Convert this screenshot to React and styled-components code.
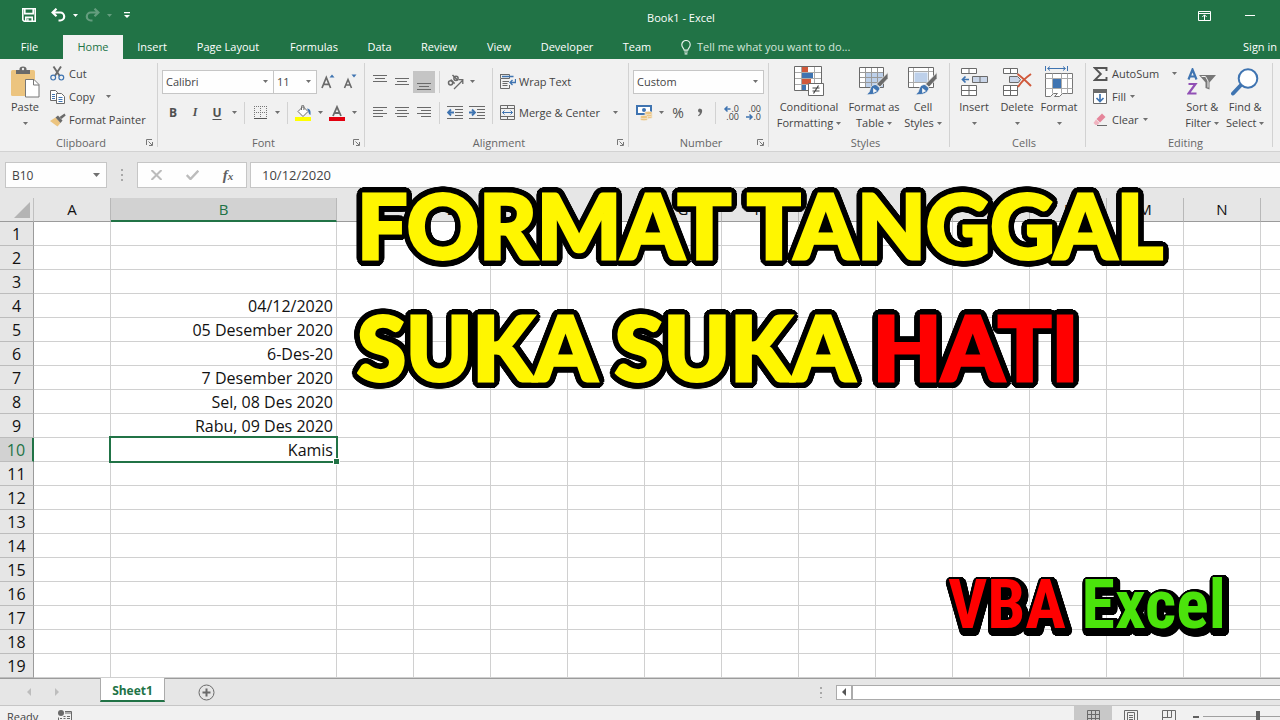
import React from "react";
import styled, { createGlobalStyle, css } from "styled-components";

const colors = {
    green: "#217346",
    ribbon: "#f1f1f1",
    chrome: "#e6e6e6",
    line: "#d2d2d2",
    field: "#c6c6c6",
    text: "#444444",
    blue: "#3f74b1",
    grid: "#d0d0d0",
};

const tabs = [
    ["Home", 60],
    ["Insert", 58],
    ["Page Layout", 94],
    ["Formulas", 78],
    ["Data", 53],
    ["Review", 66],
    ["View", 54],
    ["Developer", 82],
    ["Team", 58],
];

const columns = "ABCDEFGHIJKLMNOPQRSTUVWXYZ".split("");

const dates = {
    4: "04/12/2020",
    5: "05 Desember 2020",
    6: "6-Des-20",
    7: "7 Desember 2020",
    8: "Sel, 08 Des 2020",
    9: "Rabu, 09 Des 2020",
    10: "Kamis",
};

const rows = Array.from({ length: 19 }, (_, i) => i + 1);

/* Contour arrondi : un anneau d'ombres autour des lettres */
const outline = (radius, dx = 0, dy = 0) =>
    Array.from({ length: 32 }, (_, i) => {
        const angle = (i * Math.PI) / 16;
        const x = (Math.cos(angle) * radius + dx).toFixed(1);
        const y = (Math.sin(angle) * radius + dy).toFixed(1);
        return `${x}px ${y}px #000000`;
    }).join(", ");

export default function App() {
    return (
        <Window>
            <GlobalStyle/>
            <TitleBar/>
            <Ribbon/>
            <FormulaBar/>
            <Sheet/>
            <SheetBar/>
            <StatusBar/>
        </Window>
    );
}

/* ====== HEADER ====== */

function TitleBar() {
    return (
        <Header>
            <TitleRow>
                <QuickAccess>
                    <QuickButton aria-label="Save" $width={30}><SaveIcon/></QuickButton>
                    <QuickButton aria-label="Undo" $width={28}><UndoIcon/></QuickButton>
                    <QuickButton aria-label="Undo history" $width={6}><Caret light/></QuickButton>
                    <QuickButton aria-label="Redo" $width={28} $faded><RedoIcon/></QuickButton>
                    <QuickButton aria-label="Redo history" $width={6} $faded><Caret light/></QuickButton>
                    <QuickButton aria-label="Customize toolbar" $width={30}><CustomizeIcon/></QuickButton>
                </QuickAccess>
                <BookTitle>Book1 - Excel</BookTitle>
                <WindowButtons>
                    <QuickButton aria-label="Ribbon display options" $width={46}><RibbonOptionsIcon/></QuickButton>
                    <QuickButton aria-label="Minimize" $width={46}><MinimizeIcon/></QuickButton>
                </WindowButtons>
            </TitleRow>
            <TabRow>
                <FileTab>File</FileTab>
                {tabs.map(([name, width]) => (
                    <Tab key={name} $width={width} $active={name === "Home"}>{name}</Tab>
                ))}
                <TellMe>
                    <BulbIcon/>
                    Tell me what you want to do...
                </TellMe>
                <SignIn href="#signin">Sign in</SignIn>
            </TabRow>
        </Header>
    );
}

/* ====== RIBBON ====== */

function Ribbon() {
    return (
        <RibbonBar>
            <RibbonGroup label="Clipboard" width={158} launcher>
                <BigButton $width={50}>
                    <BigIcon><PasteIcon/></BigIcon>
                    Paste
                    <CaretLine><Caret/></CaretLine>
                </BigButton>
                <SmallColumn>
                    <SmallButton><SmallIcon><CutIcon/></SmallIcon>Cut</SmallButton>
                    <SmallButton><SmallIcon><CopyIcon/></SmallIcon>Copy<Caret gap={11}/></SmallButton>
                    <SmallButton><SmallIcon><PainterIcon/></SmallIcon>Format Painter</SmallButton>
                </SmallColumn>
            </RibbonGroup>

            <RibbonGroup label="Font" width={207} launcher>
                <ToolColumn $start={4}>
                    <ToolRow>
                        <Combo label="Font name" value="Calibri" width={112}/>
                        <Combo label="Font size" value="11" width={44} joined/>
                        <ToolButton aria-label="Increase font size"><GrowIcon/></ToolButton>
                        <ToolButton aria-label="Decrease font size"><ShrinkIcon/></ToolButton>
                    </ToolRow>
                    <ToolRow>
                        <ToolButton aria-label="Bold"><Letter>B</Letter></ToolButton>
                        <ToolButton aria-label="Italic"><Letter $italic>I</Letter></ToolButton>
                        <ToolButton aria-label="Underline"><Letter $underline>U</Letter></ToolButton>
                        <DropButton aria-label="Underline styles"><Caret/></DropButton>
                        <Divider/>
                        <ToolButton aria-label="Borders"><BordersIcon/></ToolButton>
                        <DropButton aria-label="Border styles"><Caret/></DropButton>
                        <Divider/>
                        <ToolButton aria-label="Fill color"><FillColorIcon/></ToolButton>
                        <DropButton aria-label="Fill colors"><Caret/></DropButton>
                        <ToolButton aria-label="Font color"><FontColorIcon/></ToolButton>
                        <DropButton aria-label="Font colors"><Caret/></DropButton>
                    </ToolRow>
                </ToolColumn>
            </RibbonGroup>

            <RibbonGroup label="Alignment" width={264} launcher>
                <ToolColumn $start={4}>
                    <ToolRow>
                        <ToolButton aria-label="Top align"><LinesIcon y={2}/></ToolButton>
                        <ToolButton aria-label="Middle align"><LinesIcon y={5}/></ToolButton>
                        <ToolButton aria-label="Bottom align" $pressed><LinesIcon y={10}/></ToolButton>
                        <Divider/>
                        <ToolButton aria-label="Orientation"><OrientationIcon/></ToolButton>
                        <DropButton aria-label="Orientation options"><Caret/></DropButton>
                    </ToolRow>
                    <ToolRow>
                        <ToolButton aria-label="Align left"><AlignIcon side="left"/></ToolButton>
                        <ToolButton aria-label="Center"><AlignIcon side="center"/></ToolButton>
                        <ToolButton aria-label="Align right"><AlignIcon side="right"/></ToolButton>
                        <Divider/>
                        <ToolButton aria-label="Decrease indent"><IndentIcon/></ToolButton>
                        <ToolButton aria-label="Increase indent"><IndentIcon increase/></ToolButton>
                    </ToolRow>
                </ToolColumn>
                <TallDivider/>
                <ToolColumn $start={3}>
                    <ToolRow>
                        <SmallButton><SmallIcon><WrapIcon/></SmallIcon>Wrap Text</SmallButton>
                    </ToolRow>
                    <ToolRow>
                        <SmallButton><SmallIcon><MergeIcon/></SmallIcon>Merge &amp; Center<Caret gap={13}/></SmallButton>
                    </ToolRow>
                </ToolColumn>
            </RibbonGroup>

            <RibbonGroup label="Number" width={140} launcher>
                <ToolColumn $start={4}>
                    <ToolRow>
                        <Combo label="Number format" value="Custom" width={131}/>
                    </ToolRow>
                    <ToolRow>
                        <ToolButton aria-label="Accounting format"><MoneyIcon/></ToolButton>
                        <DropButton aria-label="Currencies"><Caret/></DropButton>
                        <ToolButton aria-label="Percent style"><Letter $large>%</Letter></ToolButton>
                        <ToolButton aria-label="Comma style"><CommaIcon/></ToolButton>
                        <Divider/>
                        <ToolButton aria-label="Increase decimal"><DecimalIcon/></ToolButton>
                        <ToolButton aria-label="Decrease decimal"><DecimalIcon decrease/></ToolButton>
                    </ToolRow>
                </ToolColumn>
            </RibbonGroup>

            <RibbonGroup label="Styles" width={181}>
                <BigButton $width={80}>
                    <BigIcon><ConditionalIcon/></BigIcon>
                    Conditional
                    <CaretLine>Formatting<Caret/></CaretLine>
                </BigButton>
                <BigButton $width={50}>
                    <BigIcon><TableStyleIcon/></BigIcon>
                    Format as
                    <CaretLine>Table<Caret/></CaretLine>
                </BigButton>
                <BigButton $width={48}>
                    <BigIcon><CellStyleIcon/></BigIcon>
                    Cell
                    <CaretLine>Styles<Caret/></CaretLine>
                </BigButton>
            </RibbonGroup>

            <RibbonGroup label="Cells" width={136}>
                <BigButton $width={48}>
                    <BigIcon><InsertIcon/></BigIcon>
                    Insert
                    <CaretLine><Caret/></CaretLine>
                </BigButton>
                <BigButton $width={38}>
                    <BigIcon><DeleteIcon/></BigIcon>
                    Delete
                    <CaretLine><Caret/></CaretLine>
                </BigButton>
                <BigButton $width={46}>
                    <BigIcon><FormatIcon/></BigIcon>
                    Format
                    <CaretLine><Caret/></CaretLine>
                </BigButton>
            </RibbonGroup>

            <RibbonGroup label="Editing" width={187}>
                <SmallColumn $start={7}>
                    <SmallButton><SmallIcon><SumIcon/></SmallIcon>AutoSum<Caret gap={13}/></SmallButton>
                    <SmallButton><SmallIcon><FillDownIcon/></SmallIcon>Fill<Caret gap={4}/></SmallButton>
                    <SmallButton><SmallIcon><EraserIcon/></SmallIcon>Clear<Caret gap={4}/></SmallButton>
                </SmallColumn>
                <BigButton $width={50}>
                    <BigIcon><SortIcon/></BigIcon>
                    Sort &amp;
                    <CaretLine>Filter<Caret/></CaretLine>
                </BigButton>
                <BigButton $width={36}>
                    <BigIcon><FindIcon/></BigIcon>
                    Find &amp;
                    <CaretLine>Select<Caret/></CaretLine>
                </BigButton>
            </RibbonGroup>
        </RibbonBar>
    );
}

function RibbonGroup({ label, width, launcher, children }) {
    return (
        <Group $width={width}>
            <GroupBody>{children}</GroupBody>
            <GroupFooter>
                <span>{label}</span>
                {launcher && (
                    <Launcher aria-label={`${label} settings`}><LauncherIcon/></Launcher>
                )}
            </GroupFooter>
        </Group>
    );
}

function Combo({ label, value, width, joined }) {
    return (
        <ComboBox $width={width} $joined={joined}>
            <select aria-label={label} defaultValue={value}>
                <option>{value}</option>
            </select>
            <Caret/>
        </ComboBox>
    );
}

/* ====== FORMULA BAR ====== */

function FormulaBar() {
    return (
        <FormulaRow>
            <NameBox>
                <input aria-label="Name box" defaultValue="B10"/>
                <Caret wide/>
            </NameBox>
            <Dots/>
            <FormulaTools>
                <FormulaButton aria-label="Cancel"><CancelIcon/></FormulaButton>
                <FormulaButton aria-label="Enter"><EnterIcon/></FormulaButton>
                <FormulaButton aria-label="Insert function"><Fx>f<small>x</small></Fx></FormulaButton>
            </FormulaTools>
            <FormulaInput aria-label="Formula" defaultValue="10/12/2020"/>
        </FormulaRow>
    );
}

/* ====== SHEET ====== */

function Sheet() {
    return (
        <SheetArea>
            <GridClip>
                <Grid>
                    <colgroup>
                        <Col $width={34}/>
                        {columns.map((name) => (
                            <Col key={name} $width={name === "B" ? 226 : 77}/>
                        ))}
                    </colgroup>
                    <thead>
                        <tr>
                            <Corner aria-label="Select all">
                                <svg width="16" height="16" viewBox="0 0 16 16"><path d="M16 0V16H0z" fill="#b4b4b4"/></svg>
                            </Corner>
                            {columns.map((name) => (
                                <ColumnHead key={name} scope="col" $selected={name === "B"}>{name}</ColumnHead>
                            ))}
                        </tr>
                    </thead>
                    <tbody>
                        {rows.map((row) => (
                            <tr key={row}>
                                <RowHead scope="row" $selected={row === 10}>{row}</RowHead>
                                {columns.map((name) => (
                                    <Cell key={name}>
                                        {name === "B" && dates[row]}
                                        {name === "B" && row === 10 && <Selection/>}
                                    </Cell>
                                ))}
                            </tr>
                        ))}
                    </tbody>
                </Grid>
            </GridClip>
            <Headline>
                <span>FORMAT TANGGAL</span>
                <span>SUKA SUKA <em>HATI</em></span>
            </Headline>
            <Badge>VBA <em>Excel</em></Badge>
        </SheetArea>
    );
}

function SheetBar() {
    return (
        <SheetTabs>
            <SheetNav aria-label="Previous sheet"><ArrowIcon/></SheetNav>
            <SheetNav aria-label="Next sheet"><ArrowIcon flipped/></SheetNav>
            <SheetTab>Sheet1</SheetTab>
            <AddSheet aria-label="New sheet">
                <svg width="17" height="17" viewBox="0 0 17 17" fill="none" stroke="#6a6a6a">
                    <circle cx="8.5" cy="8.5" r="7.5"/>
                    <path d="M8.5 4.5v8M4.5 8.5h8" strokeWidth="2"/>
                </svg>
            </AddSheet>
            <ScrollArea>
                <Dots $small/>
                <ScrollButton aria-label="Scroll left"><ArrowIcon dark/></ScrollButton>
                <ScrollTrack/>
            </ScrollArea>
        </SheetTabs>
    );
}

function StatusBar() {
    return (
        <Status>
            <span>Ready</span>
            <MacroIcon/>
            <StatusRight>
                <ViewButton aria-label="Normal view" $pressed>
                    <svg width="13" height="12" viewBox="0 0 13 12" fill="none" stroke="#6a6a6a">
                        <path d="M.5.5h12v11H.5zM.5 4.5h12M.5 8.5h12M4.5.5v11M8.5.5v11"/>
                    </svg>
                </ViewButton>
                <ViewButton aria-label="Page layout view">
                    <svg width="14" height="12" viewBox="0 0 14 12" fill="none" stroke="#6a6a6a">
                        <path d="M.5.5h13v11H.5zM3.5 2.5h7v9h-7zM5 5.5h4M5 7.5h4M5 9.5h4"/>
                    </svg>
                </ViewButton>
                <ViewButton aria-label="Page break preview">
                    <svg width="14" height="12" viewBox="0 0 14 12" fill="none" stroke="#6a6a6a">
                        <path d="M.5 11.5V.5h13v11M5.5.5v7M9.5.5v7M.5 7.5h9"/>
                    </svg>
                </ViewButton>
                <ZoomOut aria-label="Zoom out"/>
                <ZoomSlider type="range" aria-label="Zoom" defaultValue="72"/>
            </StatusRight>
        </Status>
    );
}

/* ====== ICONS ====== */

function Caret({ gap, wide, light }) {
    return (
        <CaretSvg $gap={gap} width={wide ? 7 : 5} height={wide ? 4 : 3} viewBox="0 0 6 3" preserveAspectRatio="none" aria-hidden="true">
            <path d="M0 0H6L3 3z" fill={light ? "#ffffff" : "#707070"}/>
        </CaretSvg>
    );
}

function SaveIcon() {
    return (
        <svg width="14" height="14" viewBox="0 0 14 14" fill="none" stroke="#fff" strokeWidth="1.6">
            <path d="M.8.8h12.4v12.4H2.2L.8 11.8zM2.8 1v4.6h8.4V1"/>
            <path d="M3.8 13V9.4h6.4V13"/>
            <path d="M5.9 10.5v2.5" strokeWidth="1.4"/>
        </svg>
    );
}

function UndoIcon() {
    return (
        <svg width="15" height="14" viewBox="0 0 15 14" fill="none" stroke="currentColor" strokeWidth="2.2">
            <path d="M5.5.7L1.6 4.5l3.9 3.8M2 4.5h7.2a4 4 0 0 1 0 8H7.5"/>
        </svg>
    );
}

function RedoIcon() {
    return (
        <svg width="15" height="14" viewBox="0 0 15 14" fill="none" stroke="currentColor" strokeWidth="2.2">
            <path d="M9.5.7l3.9 3.8-3.9 3.8M13 4.5H5.8a4 4 0 0 0 0 8H7.5"/>
        </svg>
    );
}

function CustomizeIcon() {
    return (
        <svg width="6" height="7" viewBox="0 0 6 7">
            <path d="M0 0h6v1.2H0zM0 3h6L3 6z" fill="#fff"/>
        </svg>
    );
}

function RibbonOptionsIcon() {
    return (
        <svg width="13" height="10" viewBox="0 0 13 10" fill="none" stroke="#fff">
            <path d="M.5.5h12v9H.5zM.5 2.5h12M6.5 9V4M4.3 6l2.2-2.2L8.7 6"/>
        </svg>
    );
}

function MinimizeIcon() {
    return <svg width="10" height="1" viewBox="0 0 10 1"><path d="M0 0h10v1H0z" fill="#fff"/></svg>;
}

function BulbIcon() {
    return (
        <svg width="10" height="15" viewBox="0 0 10 15" fill="none" stroke="#e6f0ea" strokeWidth="1.2">
            <path d="M3.2 10.2C3.2 8.3.8 7.5.8 4.7a4.2 4.2 0 0 1 8.4 0c0 2.8-2.4 3.6-2.4 5.5zM3.2 12h3.6M3.6 13.8h2.8"/>
        </svg>
    );
}

function LauncherIcon() {
    return (
        <svg width="7" height="7" viewBox="0 0 7 7" fill="none" stroke="#777">
            <path d="M.5 6V.5H6M2.5 2.5L6 6M6.5 3v3.5H3"/>
        </svg>
    );
}

function PasteIcon() {
    return (
        <svg width="30" height="32" viewBox="0 0 30 32">
            <rect x="1" y="4" width="24" height="26" rx="1.5" fill="#ecc47f"/>
            <path d="M6 8V4h3.5V3a3.5 2.6 0 0 1 7 0v1H20v4z" fill="#6a6a6a"/>
            <circle cx="13" cy="3" r="1.2" fill="#f1f1f1"/>
            <path d="M15.5 13.5h8.5l5 5v12.5H15.5z" fill="#fff" stroke="#777"/>
            <path d="M23.5 13.5v5.5h5.5" fill="none" stroke="#777"/>
        </svg>
    );
}

function CutIcon() {
    return (
        <svg width="15" height="15" viewBox="0 0 15 15" fill="none">
            <path d="M3.5.5L9.7 10M11 .5L4.8 10" stroke="#6a6a6a" strokeWidth="1.9"/>
            <circle cx="3.2" cy="11.6" r="2.4" stroke={colors.blue} strokeWidth="1.2"/>
            <circle cx="11.3" cy="11.6" r="2.4" stroke={colors.blue} strokeWidth="1.2"/>
        </svg>
    );
}

function CopyIcon() {
    return (
        <svg width="15" height="14" viewBox="0 0 15 14" fill="#fff" stroke="#6a6a6a">
            <path d="M.5.5h5l2 2v8h-7z"/>
            <path d="M2 4.5h3M2 6.5h3M2 8.5h3" stroke={colors.blue}/>
            <path d="M6.5 3.5h5l3 3v7h-8z"/>
            <path d="M8.5 7.5h4M8.5 9.5h4M8.5 11.5h4" stroke={colors.blue}/>
        </svg>
    );
}

function PainterIcon() {
    return (
        <svg width="16" height="14" viewBox="0 0 16 14">
            <path d="M0 8l5.5-3.5 5 5.5-3 3.5z" fill="#ecc47f"/>
            <path d="M5.5 4.5L8 2.5l4.5 5-2 2.5z" fill="#6a6a6a"/>
            <path d="M9.5 4l5-3.5 1.2 2-4.2 3.5z" fill="#6a6a6a"/>
        </svg>
    );
}

function GrowIcon() {
    return (
        <svg width="14" height="16" viewBox="0 0 14 16">
            <path d="M1 14L5.3 3.5 9.6 14M2.6 10.3h5.5" fill="none" stroke="#6a6a6a" strokeWidth="1.7"/>
            <path d="M8.5 3.5h5L11 .5z" fill={colors.blue}/>
        </svg>
    );
}

function ShrinkIcon() {
    return (
        <svg width="14" height="16" viewBox="0 0 14 16">
            <path d="M1.5 14L5 5.5 8.5 14M3 11h4.2" fill="none" stroke="#6a6a6a" strokeWidth="1.6"/>
            <path d="M8.5.5h5L11 3.5z" fill={colors.blue}/>
        </svg>
    );
}

function BordersIcon() {
    return (
        <svg width="13" height="13" viewBox="0 0 13 13" fill="none" stroke="#777">
            <path d="M0 .5h13M0 6.5h13M.5 0v12M6.5 0v12M12.5 0v12" strokeDasharray="1 1"/>
            <path d="M0 12.5h13" stroke="#555"/>
        </svg>
    );
}

function FillColorIcon() {
    return (
        <svg width="17" height="16" viewBox="0 0 17 16">
            <path d="M3 6.5L8 1.5l5 5-5 5z" fill="#fff" stroke="#6a6a6a"/>
            <path d="M6.5 5V1.5a1.2 1.2 0 0 1 2.4 0V5" fill="none" stroke="#6a6a6a"/>
            <path d="M12 3.5c3 .2 4 2 3.5 6.5-1.5-.5-2-2-2.2-4z" fill={colors.blue}/>
            <rect y="12" width="16" height="4" fill="#ffff00"/>
        </svg>
    );
}

function FontColorIcon() {
    return (
        <svg width="16" height="16" viewBox="0 0 16 16">
            <path d="M4 11L8 2l4 9M5.5 8h5" fill="none" stroke="#6a6a6a" strokeWidth="1.8"/>
            <rect y="12" width="16" height="4" fill="#e3000f"/>
        </svg>
    );
}

function LinesIcon({ y }) {
    return (
        <svg width="14" height="18" viewBox="0 0 14 18" stroke="#6a6a6a">
            <path d={`M0 ${y + 0.5}h14M2 ${y + 3.5}h10M0 ${y + 6.5}h14`}/>
        </svg>
    );
}

function AlignIcon({ side }) {
    const x = { left: 0, center: 2, right: 4 }[side];
    return (
        <svg width="14" height="11" viewBox="0 0 14 11" stroke="#6a6a6a">
            <path d={`M0 .5h14M${x} 3.5h10M0 6.5h14M${x} 9.5h10`}/>
        </svg>
    );
}

function OrientationIcon() {
    return (
        <svg width="17" height="16" viewBox="0 0 17 16" fill="none" stroke="#6a6a6a" strokeWidth="1.5">
            <circle cx="3.6" cy="8.8" r="2.1"/>
            <path d="M3.6 5.6L7.6 9.6M5.5 1L10.5 6"/>
            <circle cx="9" cy="4.3" r="2.1"/>
            <path d="M7 15L15.5 6.5M11.5 5.7h4.3v4.3" strokeWidth="1.3"/>
        </svg>
    );
}

function IndentIcon({ increase }) {
    return (
        <svg width="16" height="13" viewBox="0 0 16 13" fill="none" stroke="#6a6a6a">
            <path d="M0 .5h16M8 3.5h8M8 6.5h8M8 9.5h8M0 12.5h16"/>
            <path d={increase ? "M0 6.5h5M3 3.5l3 3-3 3" : "M1.5 6.5H7M4 3.5l-3 3 3 3"} stroke={colors.blue} strokeWidth="1.8"/>
        </svg>
    );
}

function WrapIcon() {
    return (
        <svg width="16" height="15" viewBox="0 0 16 15" fill="none" stroke="#6a6a6a">
            <path d="M.5 0v4.5h9M.5.5h9v4M.5 5v9.5h9V11M2.5 7.5H9M2.5 9.5h5M2.5 11.5h5"/>
            <path d="M2 2.5h11.5M15.5 5v3.5H10M12.5 6L10 8.5l2.5 2.5" stroke={colors.blue} strokeWidth="1.3"/>
        </svg>
    );
}

function MergeIcon() {
    return (
        <svg width="15" height="15" viewBox="0 0 15 15" fill="none" stroke="#6a6a6a">
            <path d="M.5.5h14v14H.5zM.5 3.5h14M.5 11.5h14M7.5.5v3M7.5 11.5v3"/>
            <path d="M2.5 7.5h10M4.5 5.5l-2 2 2 2M10.5 5.5l2 2-2 2" stroke={colors.blue}/>
        </svg>
    );
}

function MoneyIcon() {
    return (
        <svg width="17" height="16" viewBox="0 0 17 16">
            <rect x="1" y="1" width="14" height="8" fill="#fff" stroke={colors.blue} strokeWidth="2"/>
            <circle cx="8" cy="5" r="2" fill={colors.blue}/>
            <g fill="#ecc47f" stroke="#f1f1f1" strokeWidth=".6">
                <ellipse cx="12.5" cy="12" rx="3.8" ry="1.7"/>
                <ellipse cx="12.5" cy="10" rx="3.8" ry="1.7"/>
                <ellipse cx="12.5" cy="8" rx="3.8" ry="1.7"/>
                <ellipse cx="8" cy="14" rx="3.8" ry="1.7"/>
                <ellipse cx="8" cy="12" rx="3.8" ry="1.7"/>
            </g>
        </svg>
    );
}

function CommaIcon() {
    return (
        <svg width="6" height="9" viewBox="0 0 6 9">
            <path d="M1 2.5a2 2 0 1 1 4.2.5C5 5.5 3.5 7.5 1.5 8.2l-.5-.8C2.2 6.7 2.8 5.8 3 4.6 1.8 4.6 1 3.7 1 2.5z" fill="#6a6a6a"/>
        </svg>
    );
}

function DecimalIcon({ decrease }) {
    return (
        <svg width="17" height="16" viewBox="0 0 17 16" overflow="visible">
            <g fill="#444" fontFamily="Open Sans, sans-serif" fontSize="9">
                <text x="16" y="7" textAnchor="end">{decrease ? ".00" : ".0"}</text>
                <text x="16" y="15" textAnchor="end">{decrease ? ".0" : ".00"}</text>
            </g>
            <path
                d={decrease ? "M1 12h6M4.5 9.5L7 12l-2.5 2.5" : "M7.5 4H2M4.5 1.5L2 4l2.5 2.5"}
                fill="none" stroke={colors.blue} strokeWidth="1.5"
            />
        </svg>
    );
}

function ConditionalIcon() {
    return (
        <svg width="30" height="31" viewBox="0 0 30 31">
            <path d="M.5.5h27v24H.5z" fill="#fff"/>
            <rect x="8" y="1" width="6" height="6" fill="#d0593b"/>
            <rect x="8" y="7" width="11" height="6" fill={colors.blue}/>
            <rect x="8" y="13" width="9" height="6" fill="#d0593b"/>
            <rect x="8" y="19" width="4" height="6" fill={colors.blue}/>
            <path d="M7.5.5v24M20.5.5v24M.5 6.5h27M.5 12.5h27M.5 18.5h27" stroke="#aaa" fill="none"/>
            <path d="M.5.5h27v24H.5z" stroke="#6a6a6a" fill="none"/>
            <path d="M14.5 17.5h15v12h-15z" fill="#fff" stroke="#6a6a6a"/>
            <path d="M18.5 22h7M18.5 25h7M24.5 19.5l-5 8" stroke="#444" strokeWidth="1.2"/>
        </svg>
    );
}

function TableStyleIcon() {
    return (
        <svg width="30" height="29" viewBox="0 0 30 29">
            <path d="M.5.5h24v20H.5z" fill="#fff"/>
            <path d="M6.5 5.5h18v15h-18z" fill="#bdd0ea"/>
            <path d="M6.5.5v20M12.5.5v20M18.5.5v20M.5 5.5h24M.5 10.5h24M.5 15.5h24" stroke="#999" fill="none"/>
            <path d="M.5.5h24v20H.5z" stroke="#6a6a6a" fill="none"/>
            <BrushShape/>
        </svg>
    );
}

function CellStyleIcon() {
    return (
        <svg width="30" height="29" viewBox="0 0 30 29">
            <path d="M.5.5h25v20H.5z" fill="#fff"/>
            <path d="M6.5 5.5h13v10h-13z" fill="#bdd0ea"/>
            <path d="M5.5.5v20M20.5.5v20M.5 4.5h25M.5 15.5h25" stroke="#aaa" fill="none"/>
            <path d="M.5.5h25v20H.5z" stroke="#6a6a6a" fill="none"/>
            <BrushShape/>
        </svg>
    );
}

function BrushShape() {
    return (
        <g stroke="#f1f1f1" strokeWidth=".8">
            <path d="M29 5.5v6L21 20l-3.5-3z" fill="#6a6a6a"/>
            <path d="M17 17.5l4 3.5c-1 5-6 7.5-14.5 6.5 3.5-.8 4-3 5-6.5 1.2-2.5 3-3.5 5.5-3.5z" fill={colors.blue}/>
            <path d="M14.5 21.5l3 2.5-3 1.5z" fill="#fff"/>
        </g>
    );
}

function InsertIcon() {
    return (
        <svg width="28" height="28" viewBox="0 0 28 28">
            <g fill="#fff" stroke="#6a6a6a">
                <path d="M1.5.5h15v5h-15zM9 .5v5M1.5 17.5h15v10h-15zM9 17.5v10M1.5 22.5h15"/>
                <path d="M12.5 8.5h15v6h-15zM20 8.5v6" fill="#c9d5e8"/>
            </g>
            <path d="M9 11.5H3M5.5 8.5l-3 3 3 3" fill="none" stroke={colors.blue} strokeWidth="1.7"/>
        </svg>
    );
}

function DeleteIcon() {
    return (
        <svg width="30" height="28" viewBox="0 0 30 28">
            <g fill="#fff" stroke="#6a6a6a">
                <path d="M1.5.5h14v5h-14zM8.5.5v5M1.5 17.5h14v10h-14zM8.5 17.5v10M1.5 22.5h14"/>
                <path d="M7.5 8.5h8l3 3-2 3h-9z" fill="#c9d5e8"/>
            </g>
            <path d="M15.5 6c4 3 9 7.5 13.5 12M29 6c-5 3.5-9.5 7.5-13 13" fill="none" stroke="#d0593b" strokeWidth="2"/>
        </svg>
    );
}

function FormatIcon() {
    return (
        <svg width="30" height="32" viewBox="0 0 30 32">
            <path d="M1.5 7.5h27v20h-10l-3 3h-5l3-3h-4l-3 3h-5z" fill="#fff" stroke="#777"/>
            <path d="M8.5 7.5v20M17.5 7.5v20M23.5 7.5v20M1.5 12.5h27M1.5 22.5h27" stroke="#aaa" fill="none"/>
            <rect x="9" y="13" width="8" height="9" fill={colors.blue}/>
            <path d="M1.5 0v5M23.5 0v5M4 2.5h17M6 .5l-2.5 2L6 4.5M19 .5l2.5 2-2.5 2" stroke={colors.blue} fill="none"/>
        </svg>
    );
}

function SumIcon() {
    return (
        <svg width="15" height="14" viewBox="0 0 15 14">
            <path d="M13.5 4V1H1.8l6 6-6 6h11.7v-3" fill="none" stroke="#555" strokeWidth="1.9"/>
        </svg>
    );
}

function FillDownIcon() {
    return (
        <svg width="14" height="15" viewBox="0 0 14 15">
            <path d="M.5 1.5h13v13H.5z" fill="#fff" stroke="#6a6a6a"/>
            <path d="M0 0h14v4H0z" fill="#6a6a6a"/>
            <path d="M7 5v7M3.5 9L7 12.5 10.5 9" fill="none" stroke={colors.blue} strokeWidth="1.7"/>
        </svg>
    );
}

function EraserIcon() {
    return (
        <svg width="14" height="14" viewBox="0 0 14 14">
            <path d="M3.5 6L9 .5 12.5 4 7 9.5z" fill="#e5859a"/>
            <path d="M3 6.5L6.5 10 4.5 12H2.5L.5 10z" fill="#f0b4c0"/>
            <path d="M4 12.5h10" stroke="#6a6a6a"/>
        </svg>
    );
}

function SortIcon() {
    return (
        <svg width="30" height="28" viewBox="0 0 30 28" fill="none">
            <path d="M1.5 11.5L5.5 1.5l4 10M3 8.5h5" stroke={colors.blue} strokeWidth="2.2"/>
            <path d="M1.5 16h7l-7 9.5H9.5" stroke="#9150b5" strokeWidth="2.2"/>
            <path d="M12 7h17l-6.5 7.5v7L18.5 20v-5.5z" fill="#777"/>
            <path d="M14.5 8.5h4l2.5 4.5v6.5" stroke="#f1f1f1"/>
        </svg>
    );
}

function FindIcon() {
    return (
        <svg width="28" height="28" viewBox="0 0 28 28">
            <path d="M10 17L2 25.5" stroke={colors.blue} strokeWidth="4" strokeLinecap="round"/>
            <circle cx="17" cy="10.5" r="9.3" fill="#fff" stroke={colors.blue} strokeWidth="2"/>
        </svg>
    );
}

function CancelIcon() {
    return <svg width="11" height="10" viewBox="0 0 11 10"><path d="M.5 0l10 10M10.5 0L.5 10" stroke="#bcbcbc" strokeWidth="2"/></svg>;
}

function EnterIcon() {
    return <svg width="13" height="10" viewBox="0 0 13 10"><path d="M.7 5L4.5 9 12.3.7" fill="none" stroke="#bcbcbc" strokeWidth="2.4"/></svg>;
}

function ArrowIcon({ flipped, dark }) {
    return (
        <svg width="4" height="8" viewBox="0 0 4 8">
            <path d={flipped ? "M0 0v8l4-4z" : "M4 0v8L0 4z"} fill={dark ? "#555" : "#bdbdbd"}/>
        </svg>
    );
}

function MacroIcon() {
    return (
        <svg width="14" height="12" viewBox="0 0 14 12" fill="none" stroke="#6a6a6a">
            <circle cx="3" cy="3" r="3" fill="#6a6a6a" stroke="none"/>
            <path d="M7 1.5h6.5V12M.5 7.5V12M7 3h6M2 8.5h2M5.5 8.5h2M9 8.5h3M2 10.5h2M5.5 10.5h2M9 10.5h3M5.5 6.5h2M9 6.5h3"/>
        </svg>
    );
}

/* ====== STYLES ====== */

const GlobalStyle = createGlobalStyle`
    *, *::before, *::after {
        box-sizing: border-box;
    }

    body {
        margin: 0;
        overflow: hidden;
        background: ${colors.chrome};
    }

    button, input, select {
        font: inherit;
        color: inherit;
        margin: 0;
        padding: 0;
        border: 0;
        background: none;
        outline: none;
    }

    svg {
        display: block;
        flex: none;
    }
`;

const Window = styled.div`
    display: flex;
    flex-direction: column;
    height: 100vh;
    overflow: hidden;
    font-family: "Open Sans", "Noto Sans", sans-serif;
    font-size: 11px;
    color: ${colors.text};

    > * {
        flex-shrink: 0;
    }
`;

const Header = styled.header`
    background: ${colors.green};
    color: #ffffff;
`;

const TitleRow = styled.div`
    display: flex;
    align-items: center;
    height: 35px;
`;

const QuickAccess = styled.div`
    display: flex;
    align-items: center;
    width: 300px;
    padding-left: 14px;
    padding-bottom: 5px;
`;

const QuickButton = styled.button`
    display: flex;
    align-items: center;
    justify-content: center;
    width: ${({ $width }) => $width}px;
    height: 22px;
    opacity: ${({ $faded }) => ($faded ? 0.3 : 1)};
`;

const BookTitle = styled.div`
    flex: 1;
    text-align: center;
`;

const WindowButtons = styled.div`
    display: flex;
    width: 218px;
    padding-left: 119px;
    padding-bottom: 4px;
`;

const TabRow = styled.nav`
    display: flex;
    height: 24px;
    line-height: 24px;
    white-space: nowrap;
`;

const FileTab = styled.button`
    && {
        width: 63px;
        padding-right: 4px;
    }
`;

const Tab = styled.button`
    width: ${({ $width }) => $width}px;

    ${({ $active }) => $active && css`
        && {
            background: ${colors.ribbon};
            color: ${colors.green};
        }
    `}
`;

const TellMe = styled.button`
    && {
        display: flex;
        align-items: center;
        gap: 6px;
        margin-left: 15px;
        color: #d3e5da;
    }
`;

const SignIn = styled.a`
    margin-left: auto;
    padding-right: 3px;
    color: inherit;
    text-decoration: none;
`;

const RibbonBar = styled.section`
    display: flex;
    height: 93px;
    background: ${colors.ribbon};
    border-bottom: 1px solid ${colors.line};
    white-space: nowrap;
`;

const Group = styled.div`
    display: flex;
    flex-direction: column;
    flex: 0 0 ${({ $width }) => $width}px;
    padding-top: 3px;
    background: linear-gradient(${colors.line}, ${colors.line}) right 4px / 1px 84px no-repeat;
`;

const GroupBody = styled.div`
    display: flex;
    height: 72px;
`;

const GroupFooter = styled.div`
    display: flex;
    align-items: center;
    height: 16px;
    padding: 0 4px 0 16px;
    color: #666666;

    span {
        flex: 1;
        text-align: center;
    }
`;

const Launcher = styled.button`
    width: 8px;
    height: 8px;
`;

const BigButton = styled.button`
    && {
        display: flex;
        flex-direction: column;
        align-items: center;
        width: ${({ $width }) => $width}px;
        padding-top: 2px;
        line-height: 16px;
    }
`;

const BigIcon = styled.span`
    display: flex;
    align-items: center;
    height: 35px;
`;

const CaretLine = styled.span`
    display: flex;
    align-items: center;
    justify-content: center;
    gap: 3px;
    height: 16px;
`;

const CaretSvg = styled.svg`
    margin-left: ${({ $gap }) => $gap || 0}px;
`;

const SmallColumn = styled.div`
    display: flex;
    flex-direction: column;
    align-items: flex-start;
    padding-left: ${({ $start }) => $start || 0}px;
`;

const SmallButton = styled.button`
    display: flex;
    align-items: center;
    height: 23px;
`;

const SmallIcon = styled.span`
    display: flex;
    width: 19px;
`;

const ToolColumn = styled.div`
    display: flex;
    flex-direction: column;
    gap: 8px;
    padding: 8px 0 0 ${({ $start }) => $start}px;
`;

const ToolRow = styled.div`
    display: flex;
    align-items: center;
    height: 23px;
`;

const ToolButton = styled.button`
    && {
        display: flex;
        align-items: center;
        justify-content: center;
        width: 22px;
        height: 22px;
        background: ${({ $pressed }) => ($pressed ? "#c5c5c5" : "transparent")};
    }
`;

const DropButton = styled.button`
    display: flex;
    align-items: center;
    justify-content: center;
    width: 12px;
    height: 22px;
`;

const Letter = styled.span`
    font-size: ${({ $large }) => ($large ? 14 : 12)}px;
    font-weight: ${({ $large }) => ($large ? 400 : 700)};
    font-style: ${({ $italic }) => ($italic ? "italic" : "normal")};
    font-family: ${({ $italic }) => ($italic ? '"Liberation Serif", serif' : "inherit")};
    text-decoration: ${({ $underline }) => ($underline ? "underline" : "none")};
    text-underline-offset: 2px;
    color: #505050;
`;

const Divider = styled.span`
    width: 1px;
    height: 22px;
    margin: 0 4px;
    background: ${colors.line};
`;

const TallDivider = styled.span`
    width: 1px;
    height: 56px;
    margin: 6px 4px 0;
    background: ${colors.line};
`;

const ComboBox = styled.label`
    display: flex;
    align-items: center;
    width: ${({ $width }) => $width}px;
    height: 24px;
    padding-right: 5px;
    margin-left: ${({ $joined }) => ($joined ? -1 : 0)}px;
    border: 1px solid ${colors.field};
    background: #fefefe;

    select {
        flex: 1;
        min-width: 0;
        padding-left: 3px;
        appearance: none;
    }
`;

const FormulaRow = styled.div`
    display: flex;
    height: 36px;
    padding: 10px 0 0 5px;
    background: ${colors.chrome};
`;

const NameBox = styled.label`
    display: flex;
    align-items: center;
    width: 102px;
    padding: 0 6px;
    border: 1px solid ${colors.field};
    background: #fefefe;
    font-size: 12px;

    input {
        flex: 1;
        min-width: 0;
    }
`;

const Dots = styled.span`
    width: 2px;
    height: ${({ $small }) => ($small ? 11 : 12)}px;
    margin: auto 14px;
    background: repeating-linear-gradient(#a8a8a8 0 2px, transparent 2px 5px);
`;

const FormulaTools = styled.div`
    display: flex;
    width: 110px;
    margin-right: 3px;
    border: 1px solid ${colors.field};
    background: #fefefe;
`;

const FormulaButton = styled.button`
    display: flex;
    flex: 1;
    align-items: center;
    justify-content: center;
`;

const Fx = styled.span`
    font: italic 700 15px/16px "Liberation Serif", serif;
    color: #606060;

    small {
        font-size: 11px;
    }
`;

const FormulaInput = styled.input`
    && {
        flex: 1;
        min-width: 0;
        padding-left: 11px;
        border: 1px solid ${colors.field};
        border-right: 0;
        background: #fefefe;
        font-size: 13px;
    }
`;

const SheetArea = styled.main`
    position: relative;
    padding-top: 10px;
    background: ${colors.chrome};
`;

const GridClip = styled.div`
    overflow: hidden;
`;

const Grid = styled.table`
    table-layout: fixed;
    width: 0;
    border-collapse: separate;
    border-spacing: 0;
    background: #ffffff;
    font-size: 16px;
    line-height: 22px;
    color: #111111;
    white-space: nowrap;
`;

const Col = styled.col`
    width: ${({ $width }) => $width}px;
`;

const Corner = styled.th`
    height: 24px;
    padding: 0 3px 0 0;
    background: ${colors.chrome};
    border-right: 1px solid #c0c0c0;
    border-bottom: 1px solid #9b9b9b;

    svg {
        margin-left: auto;
    }
`;

const ColumnHead = styled.th`
    height: 24px;
    padding: 0;
    font-size: 15px;
    font-weight: 400;
    line-height: 22px;
    vertical-align: top;
    background: ${({ $selected }) => ($selected ? "#d2d2d2" : colors.chrome)};
    color: ${({ $selected }) => ($selected ? colors.green : "inherit")};
    border-right: 1px solid #b8b8b8;
    border-bottom: 1px solid #9b9b9b;

    ${({ $selected }) => $selected && css`
        border-bottom: 2px solid ${colors.green};
    `}
`;

const RowHead = styled.th`
    height: 24px;
    padding: 1px 0 0;
    font-weight: 400;
    background: ${({ $selected }) => ($selected ? "#d2d2d2" : colors.chrome)};
    color: ${({ $selected }) => ($selected ? colors.green : "inherit")};
    border-right: ${({ $selected }) => ($selected ? `2px solid ${colors.green}` : "1px solid #9b9b9b")};
    border-bottom: 1px solid #bcbcbc;
`;

const Cell = styled.td`
    position: relative;
    height: 24px;
    padding: 1px 3px 0 0;
    text-align: right;
    border-right: 1px solid ${colors.grid};
    border-bottom: 1px solid ${colors.grid};
`;

const Selection = styled.span`
    position: absolute;
    inset: -2px;
    z-index: 1;
    border: 2px solid ${colors.green};

    &::after {
        content: "";
        position: absolute;
        right: -4px;
        bottom: -4px;
        width: 7px;
        height: 7px;
        background: ${colors.green};
        border: 1px solid #ffffff;
    }
`;

/* Gros titre posé par-dessus la grille */
const Headline = styled.h1`
    position: absolute;
    z-index: 2;
    top: -24px;
    left: 357px;
    margin: 0;
    font: 900 89px/122px Lato, "Open Sans", sans-serif;
    color: #fff600;
    -webkit-text-stroke: 3px currentColor;
    text-shadow: ${outline(7)}, ${outline(4)};
    white-space: nowrap;
    pointer-events: none;

    span {
        display: block;
    }

    em {
        font-style: normal;
        color: #ff0000;
    }
`;

const Badge = styled.p`
    position: absolute;
    z-index: 2;
    right: 54px;
    bottom: 33px;
    margin: 0;
    font: 700 68px/80px "Roboto Condensed", "Liberation Sans Narrow", Roboto, sans-serif;
    color: #ff0000;
    text-shadow: ${outline(5, 2, 3)}, ${outline(3, 1, 1)};
    white-space: nowrap;
    pointer-events: none;

    em {
        font-style: normal;
        color: #4be30b;
    }
`;

const SheetTabs = styled.div`
    display: flex;
    height: 28px;
    padding-left: 15px;
    background: ${colors.chrome};
    border-top: 1px solid #9b9b9b;
    border-bottom: 1px solid #c6c6c6;
`;

const SheetNav = styled.button`
    display: flex;
    align-items: center;
    justify-content: center;
    width: 28px;
`;

const SheetTab = styled.button`
    && {
        width: 65px;
        height: 24px;
        margin: -1px 0 0 29px;
        padding-top: 2px;
        background: #ffffff;
        border: 1px solid #ababab;
        border-top: 0;
        border-bottom: 2px solid ${colors.green};
        color: ${colors.green};
        font-size: 12px;
        font-weight: 700;
    }
`;

const AddSheet = styled.button`
    display: flex;
    align-items: center;
    justify-content: center;
    width: 82px;
`;

const ScrollArea = styled.div`
    display: flex;
    align-items: center;
    width: 37.5%;
    margin-left: auto;
`;

const ScrollButton = styled.button`
    && {
        display: flex;
        align-items: center;
        justify-content: center;
        width: 16px;
        height: 15px;
        border: 1px solid #ababab;
        background: #ffffff;
    }
`;

const ScrollTrack = styled.div`
    flex: 1;
    height: 15px;
    border: 1px solid #ababab;
    border-right: 0;
    background: #ffffff;
`;

const Status = styled.footer`
    display: flex;
    align-items: flex-start;
    height: 22px;
    padding: 4px 0 0 7px;
    background: ${colors.ribbon};

    > span {
        width: 51px;
        line-height: 14px;
    }
`;

const StatusRight = styled.div`
    display: flex;
    margin: -4px 0 0 auto;
`;

const ViewButton = styled.button`
    && {
        display: flex;
        justify-content: center;
        width: 38px;
        height: 22px;
        padding-top: 4px;
        background: ${({ $pressed }) => ($pressed ? "#c8c8c8" : "transparent")};
    }
`;

const ZoomOut = styled.button`
    && {
        width: 6px;
        height: 2px;
        margin: 10px 4px 0 5px;
        background: #606060;
    }
`;

const ZoomSlider = styled.input`
    && {
        width: 77px;
        height: 11px;
        margin-top: 5px;
        appearance: none;
        background: linear-gradient(#a0a0a0, #a0a0a0) center / 100% 1px no-repeat;
    }

    &::-webkit-slider-thumb {
        appearance: none;
        width: 4px;
        height: 11px;
        background: #606060;
    }
`;
